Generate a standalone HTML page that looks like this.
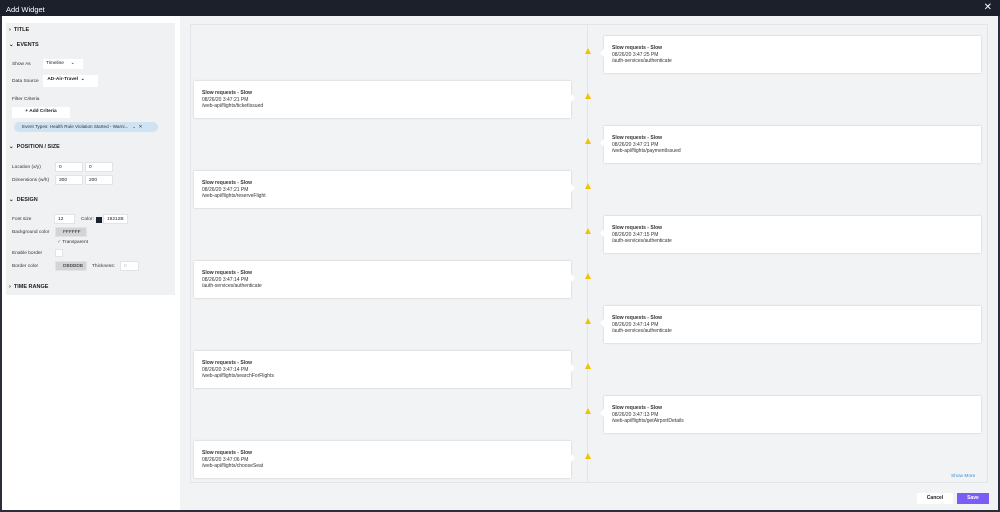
<!DOCTYPE html>
<html><head><style>
*{box-sizing:border-box;margin:0;padding:0}
body{width:1000px;height:512px;overflow:hidden;background:#2a2f3a;font-family:"Liberation Sans",sans-serif;position:relative;font-size:5px;color:#222}
.hdr{position:absolute;left:0;top:0;width:1000px;height:16px;background:#1b202b;color:#fff;font-size:7.5px;padding:5px 6px}
.hdr .x{position:absolute;right:8px;top:2px;font-size:10px}
.main{position:absolute;left:2px;top:16px;width:996px;height:494px;background:#fff}
.lp{position:absolute;left:4px;top:7px;width:169px;height:272px;background:#f0f1f3}
.sec{position:absolute;left:7px;font-weight:bold;font-size:5.5px}
.lbl{position:absolute;left:10px;font-size:4.8px;color:#333}
.box{position:absolute;background:#fff;border:1px solid #e2e3e6;font-size:4.8px;padding:2px 3px;height:10px}
.rp{position:absolute;left:178px;top:0;width:818px;height:494px;background:#f2f3f5}
.inner{position:absolute;left:10px;top:8px;width:798px;height:459px;border:1px solid #e4e5e8;overflow:hidden}
.line{position:absolute;left:396px;top:0;width:1px;height:100%;background:#e4e5e8}
.card{position:absolute;width:377px;height:37px;background:#fff;box-shadow:0 0 2px rgba(0,0,0,.2);padding:9px 8px;font-size:5px;line-height:6.5px;color:#333}
.card b{font-weight:bold}
.card.l:after{content:"";position:absolute;right:-4px;top:13px;border-top:4px solid transparent;border-bottom:4px solid transparent;border-left:4px solid #fff}
.card.r:after{content:"";position:absolute;left:-4px;top:13px;border-top:4px solid transparent;border-bottom:4px solid transparent;border-right:4px solid #fff}
.warn{position:absolute;width:0;height:0;border-left:3.5px solid transparent;border-right:3.5px solid transparent;border-bottom:6px solid #f2c200}
</style></head><body>
<div class="hdr">Add Widget<span class="x">✕</span></div>
<div class="main">
<div class="lp"></div>
<div class="sec" style="top:11px">›&nbsp; TITLE</div>
<div class="sec" style="top:26px">⌄&nbsp; EVENTS</div>
<div class="lbl" style="top:46px">Show As</div>
<div class="box" style="left:41px;top:43px;width:40px;border:none">Timeline &nbsp;&nbsp;&nbsp;&nbsp;⌄</div>
<div class="lbl" style="top:63px">Data Source</div>
<div class="box" style="left:41px;top:59px;width:55px;height:12px;font-weight:bold;border:none">&nbsp;AD-Air-Travel &nbsp;⌄</div>
<div class="lbl" style="top:81px">Filter Criteria</div>
<div class="box" style="left:10px;top:91px;width:58px;height:11px;font-weight:bold;text-align:center;border:none">+ Add Criteria</div>
<div style="position:absolute;left:12px;top:106px;width:144px;height:10px;background:#cfe3f3;border-radius:5px;font-size:4.6px;padding:2px 8px;color:#333">Event Types: Health Rule Violation Started - Warni... &nbsp;&nbsp;⌄ &nbsp;✕</div>
<div class="sec" style="top:128px">⌄&nbsp; POSITION / SIZE</div>
<div class="lbl" style="top:149px">Location (x/y)</div>
<div class="box" style="left:53px;top:146px;width:28px">0</div><div class="box" style="left:83px;top:146px;width:28px">0</div>
<div class="lbl" style="top:162px">Dimensions (w/h)</div>
<div class="box" style="left:53px;top:159px;width:28px">300</div><div class="box" style="left:83px;top:159px;width:28px">200</div>
<div class="sec" style="top:181px">⌄&nbsp; DESIGN</div>
<div class="lbl" style="top:201px">Font size</div>
<div class="box" style="left:52px;top:198px;width:21px">12</div>
<div class="lbl" style="left:79px;top:201px">Color:</div>
<div style="position:absolute;left:94px;top:201px;width:6px;height:6px;background:#19212b"></div>
<div class="box" style="left:101px;top:198px;width:25px">19212B</div>
<div class="lbl" style="top:214px">Background color</div>
<div class="box" style="left:53px;top:211px;width:32px;background:#d3d4d7">&nbsp;&nbsp;&nbsp;FFFFFF</div>
<div class="lbl" style="left:55px;top:224px"><span style="color:#3a8fd8">✓</span> Transparent</div>
<div class="lbl" style="top:235px">Enable border</div>
<div class="box" style="left:53px;top:233px;width:8px;height:8px"></div>
<div class="lbl" style="top:248px">Border color</div>
<div class="box" style="left:53px;top:245px;width:32px;background:#d3d4d7">&nbsp;&nbsp;&nbsp;DBDBDB</div>
<div class="lbl" style="left:90px;top:248px">Thickness:</div>
<div class="box" style="left:118px;top:245px;width:19px;color:#bbb">0</div>
<div class="sec" style="top:268px">›&nbsp; TIME RANGE</div>

<div class="rp"><div class="inner"><div class="line"></div>
<div class="card r" style="left:413px;top:11px"><b>Slow requests - Slow</b><br>08/26/20 3:47:25 PM<br>/auth-services/authenticate</div>
<div class="card l" style="left:3px;top:56px"><b>Slow requests - Slow</b><br>08/26/20 3:47:21 PM<br>/web-api/flights/ticketIssued</div>
<div class="card r" style="left:413px;top:101px"><b>Slow requests - Slow</b><br>08/26/20 3:47:21 PM<br>/web-api/flights/paymentIssued</div>
<div class="card l" style="left:3px;top:146px"><b>Slow requests - Slow</b><br>08/26/20 3:47:21 PM<br>/web-api/flights/reserveFlight</div>
<div class="card r" style="left:413px;top:191px"><b>Slow requests - Slow</b><br>08/26/20 3:47:15 PM<br>/auth-services/authenticate</div>
<div class="card l" style="left:3px;top:236px"><b>Slow requests - Slow</b><br>08/26/20 3:47:14 PM<br>/auth-services/authenticate</div>
<div class="card r" style="left:413px;top:281px"><b>Slow requests - Slow</b><br>08/26/20 3:47:14 PM<br>/auth-services/authenticate</div>
<div class="card l" style="left:3px;top:326px"><b>Slow requests - Slow</b><br>08/26/20 3:47:14 PM<br>/web-api/flights/searchForFlights</div>
<div class="card r" style="left:413px;top:371px"><b>Slow requests - Slow</b><br>08/26/20 3:47:13 PM<br>/web-api/flights/getAirportDetails</div>
<div class="card l" style="left:3px;top:416px"><b>Slow requests - Slow</b><br>08/26/20 3:47:06 PM<br>/web-api/flights/chooseSeat</div>
<div class="warn" style="left:394px;top:23px"></div><div class="warn" style="left:394px;top:68px"></div>
<div class="warn" style="left:394px;top:113px"></div><div class="warn" style="left:394px;top:158px"></div>
<div class="warn" style="left:394px;top:203px"></div><div class="warn" style="left:394px;top:248px"></div>
<div class="warn" style="left:394px;top:293px"></div><div class="warn" style="left:394px;top:338px"></div>
<div class="warn" style="left:394px;top:383px"></div><div class="warn" style="left:394px;top:428px"></div>
<div style="position:absolute;left:760px;top:449px;font-size:4.8px;color:#3a8fd8">Show More</div>
</div>
<div style="position:absolute;left:737px;top:477px;width:36px;height:11px;background:#fff;font-size:5px;font-weight:bold;text-align:center;line-height:11px">Cancel</div>
<div style="position:absolute;left:777px;top:477px;width:32px;height:11px;background:#7b5cf5;color:#fff;font-size:5px;font-weight:bold;text-align:center;line-height:11px">Save</div>
</div>
</div>
</body></html>
